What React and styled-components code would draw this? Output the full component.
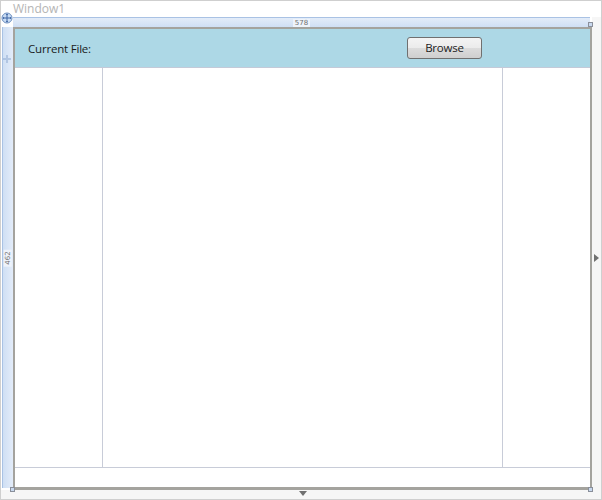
import React from 'react';
import styled, { createGlobalStyle } from 'styled-components';

const Global = createGlobalStyle`
  html, body { margin: 0; padding: 0; background: #fff; }
  body { font-family: "Open Sans", "Noto Sans", sans-serif; }
`;

const Designer = styled.div`
  position: relative;
  width: 602px;
  height: 500px;
  box-sizing: border-box;
  border: 1px solid #cfcfcf;
  background: #fff;
  display: grid;
  grid-template-columns: 12px 579px 1fr;
  grid-template-rows: 16px 10px 463px 1fr;
  overflow: hidden;
`;

const Title = styled.div`
  grid-column: 1 / 3;
  grid-row: 1;
  padding-left: 12px;
  font-size: 12px;
  line-height: 16px;
  color: #b4b4b4;
`;

const TopRuler = styled.div`
  grid-column: 2;
  grid-row: 2;
  margin-right: 2px;
  background: linear-gradient(#e3ecf9, #cfdff4);
  border-top: 1px solid #a9c2e4;
  display: flex;
  justify-content: center;
  align-items: center;
`;

const LeftRuler = styled.div`
  grid-column: 1;
  grid-row: 3;
  margin-left: 1px;
  margin-bottom: 2px;
  background: linear-gradient(90deg, #cfdff4, #e3ecf9);
  border-left: 1px solid #a9c2e4;
  display: flex;
  justify-content: center;
  align-items: center;
`;

const RulerLabel = styled.span`
  font-family: "DejaVu Sans", sans-serif;
  font-size: 7px;
  line-height: 8px;
  color: #707070;
  background: #eef3fb;
  padding: 0 2px;
  transform: ${(p) => (p.$vertical ? 'rotate(-90deg)' : 'none')};
`;

const Frame = styled.div`
  grid-column: 2;
  grid-row: 3;
  border: 2px solid #a4a39e;
  border-bottom-width: 3px;
  display: flex;
  flex-direction: column;
  background: #fff;
`;

const Header = styled.div`
  height: 38px;
  background: #add8e6;
  display: flex;
  align-items: center;
  padding-left: 13px;
  border-bottom: 1px solid #c4cad8;
`;

const Label = styled.span`
  font-size: 11.5px;
  letter-spacing: -0.2px;
  color: #1b1b1b;
  width: 379px;
`;

const Button = styled.button`
  width: 75px;
  height: 22px;
  margin-top: -1px;
  border: 1px solid #707070;
  border-radius: 3px;
  background: linear-gradient(#f4f4f4 0%, #ebebeb 50%, #dcdcdc 51%, #cfcfcf 100%);
  font-family: "Open Sans", "Noto Sans", sans-serif;
  font-size: 11.5px;
  letter-spacing: -0.2px;
  color: #1b1b1b;
  padding: 0;
`;

const Body = styled.div`
  flex: 1;
  display: grid;
  grid-template-columns: 88px 400px 1fr;
  grid-template-rows: 400px 1fr;
`;

const Cell = styled.div`
  border-right: ${(p) => (p.$right ? '1px solid #c8ccd8' : 'none')};
  border-bottom: ${(p) => (p.$bottom ? '1px solid #c8ccd8' : 'none')};
`;

const RightStrip = styled.div`
  grid-column: 3;
  grid-row: 2 / 5;
  background: #f6f6f6;
  display: flex;
  align-items: center;
  justify-content: center;
  padding-top: 0;
`;

const BottomStrip = styled.div`
  grid-column: 1 / 3;
  grid-row: 4;
  background: #f6f6f6;
  display: flex;
  justify-content: center;
  padding-left: 12px;
`;

const Arrow = styled.span`
  width: 0;
  height: 0;
  border-style: solid;
  ${(p) =>
    p.$down
      ? 'border-width: 5px 4px 0 4px; border-color: #707070 transparent transparent transparent; margin-top: 1px;'
      : 'border-width: 4px 0 4px 5px; border-color: transparent transparent transparent #707070;'}
`;

const Handle = styled.span`
  position: absolute;
  width: 5px;
  height: 5px;
  box-sizing: border-box;
  border: 1px solid #8a8f9a;
  background: #c9d9ef;
  left: ${(p) => p.$x}px;
  top: ${(p) => p.$y}px;
`;

const MoveGrip = styled.svg`
  position: absolute;
  left: 0;
  top: 11px;
`;

const GhostGrip = styled.svg`
  position: absolute;
  left: 0;
  top: 52px;
  opacity: 0.35;
`;

export default function App() {
  return (
    <>
      <Global />
      <Designer>
        <Title>Window1</Title>
        <TopRuler>
          <RulerLabel>578</RulerLabel>
        </TopRuler>
        <LeftRuler>
          <RulerLabel $vertical>462</RulerLabel>
        </LeftRuler>
        <Frame>
          <Header>
            <Label>Current File:</Label>
            <Button>Browse</Button>
          </Header>
          <Body>
            <Cell $right $bottom />
            <Cell $right $bottom />
            <Cell $bottom />
            <Cell />
            <Cell />
            <Cell />
          </Body>
        </Frame>
        <RightStrip>
          <Arrow />
        </RightStrip>
        <BottomStrip>
          <Arrow $down />
        </BottomStrip>
        <MoveGrip width="12" height="12" viewBox="0 0 12 12">
          <circle cx="6" cy="6" r="5" fill="#c9dcf3" stroke="#6d8fc0" strokeWidth="1" />
          <path d="M6 2v8M2 6h8" stroke="#3d64a3" strokeWidth="1" />
          <path d="M6 1.5l-1.3 1.5h2.6zM6 10.5l-1.3-1.5h2.6zM1.5 6l1.5-1.3v2.6zM10.5 6l-1.5-1.3v2.6z" fill="#3d64a3" />
        </MoveGrip>
        <GhostGrip width="12" height="12" viewBox="0 0 12 12">
          <path d="M6 2v8M2 6h8" stroke="#6d8fc0" strokeWidth="2" />
        </GhostGrip>
        <Handle $x={587} $y={21} />
        <Handle $x={587} $y={486} />
        <Handle $x={9} $y={486} />
      </Designer>
    </>
  );
}
